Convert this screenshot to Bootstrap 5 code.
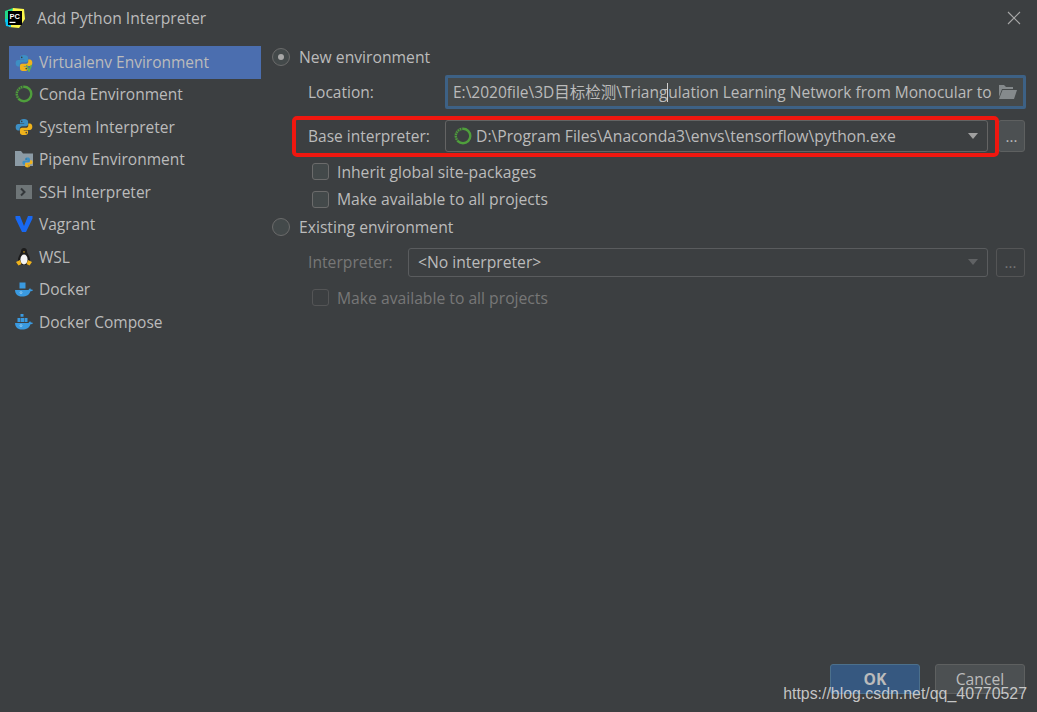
<!DOCTYPE html>
<html lang="en">
<head>
  <meta charset="UTF-8">
  <meta name="viewport" content="width=device-width, initial-scale=1.0">
  <title>Add Python Interpreter</title>
  <link rel="stylesheet" href="https://cdn.jsdelivr.net/npm/bootstrap@5.3.0/dist/css/bootstrap.min.css">
  <style>
    html, body { height: 100%; overflow: hidden; }
    body {
      background-color: #3c3f41;
      color: #bbbbbb;
      font-family: "Open Sans", "Noto Sans CJK SC", sans-serif;
      font-size: 15.7px;
    }
    .tx { padding-top: 2px; }
    .dialog { width: 1037px; height: 712px; }
    .title-row { height: 44px; padding: 0 16px 8px 5px; }
    .title-text { color: #bbbbbb; font-size: 15.7px; margin-left: 12px; }
    .side { width: 261px; padding: 2px 0 0 9px; }
    .side .list-group-item {
      background: transparent; border: 0; border-radius: 0; color: #bbbbbb;
      height: 32.5px; padding: 0 0 0 6px; gap: 6px; font-size: 15.5px;
    }
    .side .list-group-item span { padding-top: 1px; }
    .side .list-group-item.active { background: #4b6eaf; height: 33px; margin-bottom: -1px; }
    .side svg { width: 18px; height: 18px; flex: none; }
    .pane { padding-left: 11px; width: 765px; }
    .r-head { height: 26px; }
    .r-head.next { margin-top: 1px; }
    .r-field { height: 44px; padding-left: 36px; }
    .r-check { height: 27.5px; padding-left: 40px; }
    .r-label { width: 137px; flex: none; font-size: 15.5px; }
    .r-label-sm { width: 100px; flex: none; color: #777777; }
    .radio-dot {
      width: 18px; height: 18px; border-radius: 50%; border: 1px solid #6b6b6b; background: #43494a;
      margin-right: 9px; flex: none;
    }
    .radio-dot.on::after { content: ""; width: 6px; height: 6px; border-radius: 50%; background: #a7a7a7; }
    .check-box {
      width: 17px; height: 17px; border: 1px solid #6b6b6b; border-radius: 3px; background: #43494a;
      margin-right: 8px; flex: none;
    }
    .check-box.off { border-color: #545556; background: transparent; }
    .dim { color: #777777; }
    .field-loc.form-control {
      background: #45494a; color: #bbbbbb; border: 3px solid #3d6185; border-radius: 2px;
      width: 582px; height: 34px; padding: 0 6px 0 5px; font-size: 15.5px;
    }
    .loc-text { overflow: hidden; white-space: nowrap; width: 539px; flex: none; }
    .caret-bar { display: inline-block; width: 0; height: 19px; border-left: 1px solid #d0d0d0; vertical-align: -4px; }
    .field-sel.form-select {
      background: #3c3f41 none; color: #bbbbbb; border: 1px solid #646464; border-radius: 3px;
      height: 32px; padding: 0 9px 0 8px; font-size: 15.7px; width: 543px;
    }
    .field-sel.wide { width: 580px; height: 29px; padding-left: 9px; border-color: #5a5c5e; }
    .tri { width: 0; height: 0; border-left: 5.5px solid transparent; border-right: 5.5px solid transparent; border-top: 6px solid #a0a0a0; }
    .wide .tri { border-top-color: #606264; }
    .more-btn.btn {
      background: #4c5052; border: 1px solid #5e6060; color: #bbbbbb; border-radius: 3px;
      width: 27px; height: 32px; margin-left: 10px; padding: 0; font-size: 15px; line-height: 26px;
    }
    .more-btn.off.btn { background: transparent; border-color: #545556; color: #777777; width: 29px; height: 29px; margin-left: 8px; opacity: 1; }
    .red-box { position: absolute; left: 20px; top: 2px; width: 707px; height: 41px; border: 4px solid #f0170f; border-radius: 5px; pointer-events: none; }
    .foot { padding: 0 12px 0 0; height: 48px; gap: 15px; }
    .foot .btn { width: 90px; height: 30px; border-radius: 3px; padding: 2px 0 0; font-size: 15.7px; color: #bbbbbb; }
    .btn-ok { background: #365880; border: 1px solid #4c708c; font-weight: 700; }
    .btn-no { background: #4c5052; border: 1px solid #5e6060; }
    .mark-url {
      position: absolute; right: 10px; bottom: 9px; color: rgba(222,222,222,.85);
      font-family: "Liberation Sans", Arial, sans-serif; font-size: 15.9px; line-height: 18px;
    }
  </style>
</head>
<body>
  <svg width="0" height="0" class="position-absolute">
    <symbol id="py" viewBox="0 0 16 16">
      <path fill="#3d8fc4" d="M8 .8C5.6.8 4.4 1.7 4.4 3.2v1.6h3.8v.6H2.9C1.4 5.4.6 6.5.6 8.2s.8 2.9 2.2 2.9h1.4V9.4c0-1.2 1-2.1 2.1-2.1h3.5c1 0 1.8-.8 1.8-1.8V3.2C11.600 1.700 10.200.8 8 .8z"/>
      <path fill="#f0b31c" d="M8 15.200c2.400 0 3.600-.9 3.600-2.400v-1.600H7.800v-.6h5.300c1.500 0 2.300-1.100 2.300-2.800s-.8-2.900-2.200-2.900h-1.400v1.700c0 1.200-1 2.100-2.100 2.100H6.200c-1 0-1.800.8-1.800 1.800v2.300C4.400 14.300 5.800 15.200 8 15.200z"/>
      <circle cx="6" cy="3" r=".7" fill="#3c3f41"/><circle cx="10" cy="13" r=".7" fill="#3c3f41"/>
    </symbol>
    <symbol id="conda" viewBox="0 0 18 18">
      <circle cx="9" cy="9" r="7.300" fill="none" stroke="#4f9f3c" stroke-width="2.400"/>
      <path d="M3.300 13.600A7.300 7.300 0 0 1 9 1.700" fill="none" stroke="#3c3f41" stroke-width="2.600" stroke-dasharray="1.100 1.300" opacity=".75"/>
    </symbol>
    <symbol id="whale" viewBox="0 0 18 18">
      <path fill="#3a9ae0" d="M0 10h13.500c.4-1 1.300-1.700 2-1.400.4.100.3.500.2.800.8 0 1.700.100 2.300.5-.6 1-1.600 1.300-2.600 1.300C14.500 14.500 11.700 16.500 7 16.500 2.500 16.500.2 14 0 10z"/>
      <circle cx="6" cy="12.600" r="1" fill="none" stroke="#cfe6f7" stroke-width=".5"/>
    </symbol>
  </svg>

  <div class="dialog position-relative d-flex flex-column">
    <div class="title-row d-flex align-items-center">
      <svg width="20" height="20" viewBox="0 0 20 20">
        <path fill="#21d789" d="M0 3l8-3v11l-8 3z"/>
        <path fill="#fcf84a" d="M8 0l11 1 1 10-6 9-10-1z"/>
        <path fill="#07c3f2" d="M0 11l6 0 0 8-5-1z"/>
        <rect x="3" y="3" width="14" height="14" fill="#000"/>
        <text x="4.500" y="10.500" fill="#fff" font-family="Liberation Sans, sans-serif" font-size="7.500" font-weight="700">PC</text>
        <rect x="4.500" y="13.800" width="6" height="1.200" fill="#fff"/>
      </svg>
      <span class="title-text tx">Add Python Interpreter</span>
      <svg class="ms-auto" width="14" height="14" viewBox="0 0 14 14"><path d="M1 1l12 12M13 1L1 13" stroke="#a8a8a8" stroke-width="1.100" fill="none"/></svg>
    </div>

    <div class="d-flex flex-grow-1">
      <div class="side">
        <div class="list-group">
          <div class="list-group-item active d-flex align-items-center">
            <svg viewBox="0 0 18 18"><use href="#py" width="18" height="18"/><path d="M11.500 11l2.500 6 2.500-6" fill="none" stroke="#5fb04f" stroke-width="1.500"/></svg>
            <span>Virtualenv Environment</span>
          </div>
          <div class="list-group-item d-flex align-items-center"><svg viewBox="0 0 18 18"><use href="#conda" width="18" height="18"/></svg><span>Conda Environment</span></div>
          <div class="list-group-item d-flex align-items-center"><svg viewBox="0 0 18 18"><use href="#py" width="18" height="18"/></svg><span>System Interpreter</span></div>
          <div class="list-group-item d-flex align-items-center">
            <svg viewBox="0 0 18 18"><path fill="#8c9ba5" d="M0 1h6l2 2.500h10V16H0z"/><use href="#py" x="7" y="7" width="11" height="11"/></svg>
            <span>Pipenv Environment</span>
          </div>
          <div class="list-group-item d-flex align-items-center">
            <svg viewBox="0 0 18 18"><rect x="1" y="2" width="16" height="14" fill="#6e7577"/><path d="M6 5.500L9.500 9 6 12.500" fill="none" stroke="#33373a" stroke-width="2"/></svg>
            <span>SSH Interpreter</span>
          </div>
          <div class="list-group-item d-flex align-items-center">
            <svg viewBox="0 0 18 18"><path fill="#1868f2" d="M.5 1h4.500l4 10 4-10h4.500v2.500L11 17H7L.5 3.500z"/></svg>
            <span>Vagrant</span>
          </div>
          <div class="list-group-item d-flex align-items-center">
            <svg viewBox="0 0 18 18">
              <path fill="#1c1c1c" d="M9 0c2 0 3 1.500 3 3.500 0 2 3 4.500 3 8.500 0 3-3 5-6 5s-6-2-6-5c0-4 3-6.500 3-8.500C6 1.500 7 0 9 0z"/>
              <ellipse cx="9" cy="11.500" rx="3.600" ry="5" fill="#f4f4f4"/>
              <path fill="#f0b31c" d="M1 14l4-2 1.500 4-3 1.500zM17 14l-4-2-1.500 4 3 1.500zM8 3.500h2L9 5z"/>
            </svg>
            <span>WSL</span>
          </div>
          <div class="list-group-item d-flex align-items-center">
            <svg viewBox="0 0 18 18"><use href="#whale" width="18" height="18"/><rect x="4.500" y="2.500" width="6" height="6" fill="#3a9ae0"/></svg>
            <span>Docker</span>
          </div>
          <div class="list-group-item d-flex align-items-center">
            <svg viewBox="0 0 18 18"><use href="#whale" width="18" height="18"/><path fill="#3a9ae0" d="M5.500 1h3v2.800h-3zM2.500 5h3v4h-3zM6 5h3v4H6zM9.500 5h3v4h-3z"/></svg>
            <span>Docker Compose</span>
          </div>
        </div>
      </div>

      <div class="pane">
        <div class="r-head d-flex align-items-center">
          <span class="radio-dot on d-flex align-items-center justify-content-center"></span><span class="tx">New environment</span>
        </div>
        <div class="r-field d-flex align-items-center">
          <span class="r-label tx">Location:</span>
          <div class="field-loc form-control d-flex align-items-center">
            <span class="loc-text tx">E:\2020file\3D目标检测\Triang<span class="caret-bar"></span>ulation Learning Network from Monocular to Stereo</span>
            <svg class="ms-auto" width="19" height="14" viewBox="0 0 19 14">
              <path fill="#858a8c" d="M1 0h5l2 2h7v2H4L1 12z"/><path fill="#858a8c" d="M4.500 5H19l-3 9H1z"/>
            </svg>
          </div>
        </div>
        <div class="r-field d-flex align-items-center position-relative">
          <span class="r-label tx">Base interpreter:</span>
          <div class="field-sel form-select d-flex align-items-center">
            <svg width="18" height="18" viewBox="0 0 18 18" class="me-1 flex-shrink-0"><use href="#conda" width="18" height="18"/></svg>
            <span class="tx">D:\Program Files\Anaconda3\envs\tensorflow\python.exe</span>
            <span class="tri ms-auto"></span>
          </div>
          <button type="button" class="more-btn btn">...</button>
          <div class="red-box"></div>
        </div>
        <div class="r-check d-flex align-items-center"><span class="check-box"></span><span class="tx">Inherit global site-packages</span></div>
        <div class="r-check d-flex align-items-center"><span class="check-box"></span><span class="tx">Make available to all projects</span></div>
        <div class="r-head next d-flex align-items-center">
          <span class="radio-dot"></span><span class="tx">Existing environment</span>
        </div>
        <div class="r-field d-flex align-items-center">
          <span class="r-label-sm tx">Interpreter:</span>
          <div class="field-sel wide form-select d-flex align-items-center">
            <span class="tx">&lt;No interpreter&gt;</span>
            <span class="tri ms-auto"></span>
          </div>
          <button type="button" class="more-btn off btn">...</button>
        </div>
        <div class="r-check d-flex align-items-center dim"><span class="check-box off"></span><span class="tx">Make available to all projects</span></div>
      </div>
    </div>

    <div class="foot d-flex justify-content-end align-items-start">
      <button type="button" class="btn btn-ok">OK</button>
      <button type="button" class="btn btn-no">Cancel</button>
    </div>
    <div class="mark-url">https://blog.csdn.net/qq_40770527</div>
  </div>
</body>
</html>
